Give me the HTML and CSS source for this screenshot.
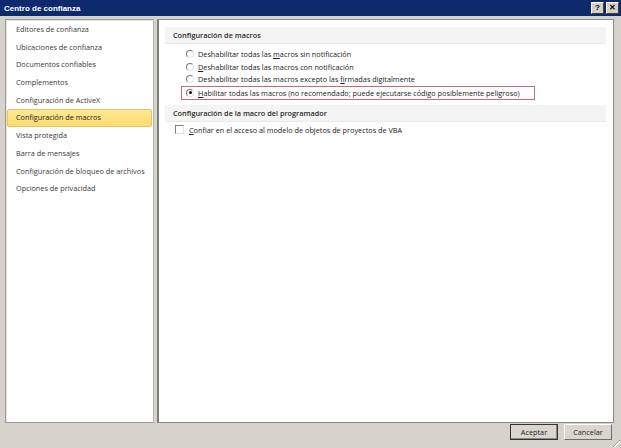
FILE: index.html
```html
<!DOCTYPE html>
<html lang="es">
<head>
<meta charset="utf-8">
<title>Centro de confianza</title>
<link rel="stylesheet" href="styles.css">
</head>
<body>
<div class="window">
  <div class="titlebar">
    <span class="title">Centro de confianza</span>
    <div class="tbtns">
      <span class="tbtn">?</span>
      <span class="tbtn">&#x2715;</span>
    </div>
  </div>
  <div class="content">
    <div class="nav">
      <div class="nav-item">Editores de confianza</div>
      <div class="nav-item">Ubicaciones de confianza</div>
      <div class="nav-item">Documentos confiables</div>
      <div class="nav-item">Complementos</div>
      <div class="nav-item">Configuración de ActiveX</div>
      <div class="nav-item active">Configuración de macros</div>
      <div class="nav-item">Vista protegida</div>
      <div class="nav-item">Barra de mensajes</div>
      <div class="nav-item">Configuración de bloqueo de archivos</div>
      <div class="nav-item">Opciones de privacidad</div>
    </div>
    <div class="main">
      <div class="section-head">Configuración de macros</div>
      <div class="options">
        <div class="opt"><span class="radio"></span><span>Deshabilitar todas las <u>m</u>acros sin notificación</span></div>
        <div class="opt"><span class="radio"></span><span><u>D</u>eshabilitar todas las macros con notificación</span></div>
        <div class="opt"><span class="radio"></span><span>Deshabilitar todas las macros excepto las <u>f</u>irmadas digitalmente</span></div>
        <div class="opt selected"><span class="radio on"></span><span><u>H</u>abilitar todas las macros (no recomendado; puede ejecutarse código posiblemente peligroso)</span></div>
      </div>
      <div class="section-head second">Configuración de la macro del programador</div>
      <div class="check-row"><span class="check"></span><span><u>C</u>onfiar en el acceso al modelo de objetos de proyectos de VBA</span></div>
    </div>
  </div>
  <div class="footer">
    <button class="btn default">Aceptar</button>
    <button class="btn">Cancelar</button>
    <span class="grip"></span>
  </div>
</div>
</body>
</html>
```

FILE: styles.css
```css
html, body {
  margin: 0;
  padding: 0;
}
body {
  width: 621px;
  height: 448px;
  overflow: hidden;
  background: #d4d0c8;
  font-family: "Open Sans", "Noto Sans", sans-serif;
  font-size: 7.3px;
  color: #222;
}
.window {
  width: 621px;
  height: 448px;
  display: flex;
  flex-direction: column;
  box-sizing: border-box;
  background: #d6d3cc;
}
.titlebar {
  height: 16px;
  background: #0c2a6c;
  display: flex;
  align-items: center;
  justify-content: space-between;
  padding: 0 2px 0 4px;
  flex: none;
}
.title {
  color: #fff;
  font-family: "Liberation Sans", sans-serif;
  font-weight: bold;
  font-size: 8px;
}
.tbtns {
  display: flex;
  gap: 2px;
}
.tbtn {
  width: 11px;
  height: 10px;
  background: #d4d0c8;
  border: 1px solid;
  border-color: #fff #404040 #404040 #fff;
  font-family: "Liberation Sans", sans-serif;
  font-weight: bold;
  font-size: 8px;
  line-height: 10px;
  text-align: center;
  color: #000;
}
.content {
  flex: none;
  height: 404px;
  display: flex;
  gap: 3px;
  padding: 3px 7px 0 5px;
}
.nav {
  width: 145px;
  flex: none;
  background: #fff;
  border: 1px solid #9c9a94;
  border-right-color: #b8b5ae;
  box-shadow: inset 1px 1px 0 #e6e4df;
  padding: 1px 1px 0 1px;
  display: flex;
  flex-direction: column;
}
.nav-item {
  box-sizing: border-box;
  height: 17.7px;
  line-height: 15.7px;
  padding-left: 8px;
  color: #3a3a3a;
  border: 1px solid transparent;
  border-radius: 2px;
  white-space: nowrap;
}
.nav-item.active {
  background: linear-gradient(#fde995, #fbdb70);
  border-color: #e7c262;
  color: #222;
}
.main {
  flex: 1;
  background: #fff;
  border: 1px solid #8f8d88;
  border-left: 2px solid #7f7d78;
  padding: 7px 7px 0 6px;
}
.section-head {
  height: 16px;
  line-height: 16px;
  background: #f4f4f4;
  border-bottom: 1px solid #eaeaea;
  padding-left: 8px;
  font-weight: 600;
  color: #2a2a2a;
}
.section-head.second {
  margin-top: 5px;
}
.options {
  padding: 4px 0 0 16px;
  display: flex;
  flex-direction: column;
}
.opt {
  height: 12.5px;
  display: flex;
  align-items: center;
  gap: 4px;
  white-space: nowrap;
  padding-left: 5px;
}
.opt.selected {
  width: 348px;
  height: 12px;
  border: 1px solid #c46a7a;
  padding-left: 4px;
}
.radio {
  width: 6px;
  height: 6px;
  border-radius: 50%;
  border: 1px solid #7a7a7a;
  border-right-color: #e4e4e4;
  border-bottom-color: #e4e4e4;
  background: #fff;
  display: inline-block;
  position: relative;
  flex: none;
}
.radio.on::after {
  content: "";
  position: absolute;
  left: 1.5px;
  top: 1.5px;
  width: 3px;
  height: 3px;
  border-radius: 50%;
  background: #111;
}
.check-row {
  display: flex;
  align-items: center;
  gap: 5px;
  padding: 3px 0 0 10px;
  white-space: nowrap;
}
.check {
  width: 7px;
  height: 7px;
  border: 1px solid #808080;
  border-right-color: #e0e0e0;
  border-bottom-color: #e0e0e0;
  background: #fff;
  flex: none;
}
.footer {
  flex: 1;
  display: flex;
  justify-content: flex-end;
  align-items: flex-start;
  gap: 6px;
  padding: 1px 9px 0 0;
  position: relative;
}
.btn {
  width: 48px;
  height: 16px;
  padding: 0;
  background: #d9d6cf;
  border: 1px solid;
  border-color: #fff #6e6c68 #6e6c68 #fff;
  font-family: "Open Sans", "Noto Sans", sans-serif;
  font-size: 7.3px;
  color: #222;
}
.btn.default {
  outline: 1px solid #333;
  outline-offset: -1px;
  box-shadow: inset -1px -1px 0 #8a8884;
}
.grip {
  position: absolute;
  right: 1px;
  bottom: 1px;
  width: 8px;
  height: 8px;
  background: repeating-linear-gradient(135deg, transparent 0 2px, #9c9a94 2px 3px, #fff 3px 4px);
  clip-path: polygon(100% 0, 100% 100%, 0 100%);
}
```
